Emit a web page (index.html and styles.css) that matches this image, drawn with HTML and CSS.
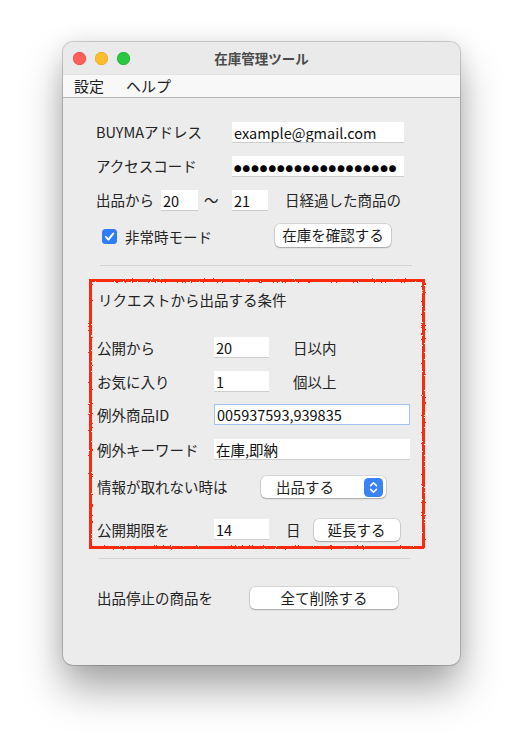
FILE: index.html
```html
<!DOCTYPE html>
<html lang="ja">
<head>
<meta charset="utf-8">
<title>在庫管理ツール</title>
<link rel="stylesheet" href="styles.css">
</head>
<body>
<svg class="defs" width="0" height="0" aria-hidden="true">
  <filter id="rough" x="-5%" y="-5%" width="110%" height="110%">
    <feTurbulence type="fractalNoise" baseFrequency="0.9" numOctaves="2" seed="3" result="noise"/>
    <feDisplacementMap in="SourceGraphic" in2="noise" scale="2.6" xChannelSelector="R" yChannelSelector="G"/>
  </filter>
</svg>
<div class="window">
  <div class="titlebar">
    <div class="lights">
      <span class="light red"></span>
      <span class="light yellow"></span>
      <span class="light green"></span>
    </div>
    <div class="title">在庫管理ツール</div>
    <div></div>
  </div>
  <div class="menubar">
    <span>設定</span>
    <span>ヘルプ</span>
  </div>
  <div class="content">
    <div class="top">
      <div class="row">
        <div class="lbl-top">BUYMAアドレス</div>
        <div class="field w172">example@gmail.com</div>
      </div>
      <div class="row">
        <div class="lbl-top">アクセスコード</div>
        <div class="field w172"><span class="dots">●●●●●●●●●●●●●●●●●●●</span></div>
      </div>
      <div class="row">
        <div class="lbl-from">出品から</div>
        <div class="field w37">20</div>
        <div class="tilde">〜</div>
        <div class="field w36">21</div>
        <div class="after">日経過した商品の</div>
      </div>
      <div class="row row-chk">
        <div class="chk">
          <svg width="15" height="15" viewBox="0 0 15 15"><rect width="15" height="15" rx="3.5" fill="#2f7cf6"/><path d="M3.9 7.9 L6.4 10.6 L11.2 4.6" stroke="#fff" stroke-width="2" fill="none" stroke-linecap="round" stroke-linejoin="round"/></svg>
          <span>非常時モード</span>
        </div>
        <div class="btn w116">在庫を確認する</div>
      </div>
    </div>
    <div class="sep sep1"></div>
    <div class="req">
      <div class="req-title">リクエストから出品する条件</div>
      <div class="row r1">
        <div class="lbl-req">公開から</div>
        <div class="field w55">20</div>
        <div class="unit">日以内</div>
      </div>
      <div class="row r2">
        <div class="lbl-req">お気に入り</div>
        <div class="field w55">1</div>
        <div class="unit">個以上</div>
      </div>
      <div class="row r3">
        <div class="lbl-req">例外商品ID</div>
        <div class="field w196 focus">005937593,939835</div>
      </div>
      <div class="row r4">
        <div class="lbl-req">例外キーワード</div>
        <div class="field w196">在庫,即納</div>
      </div>
      <div class="row r5">
        <div class="lbl-wide">情報が取れない時は</div>
        <div class="select">
          <span>出品する</span>
          <svg class="stepper" width="19" height="19" viewBox="0 0 19 19"><rect width="19" height="19" rx="4.5" fill="#3a83f7"/><path d="M6.6 7.6 L9.5 4.7 L12.4 7.6 M6.6 11.4 L9.5 14.3 L12.4 11.4" stroke="#fff" stroke-width="1.6" fill="none" stroke-linecap="round" stroke-linejoin="round"/></svg>
        </div>
      </div>
      <div class="row r6">
        <div class="lbl-req">公開期限を</div>
        <div class="field w55">14</div>
        <div class="day">日</div>
        <div class="btn w86">延長する</div>
      </div>
    </div>
    <div class="sep sep2"></div>
    <div class="row final">
      <div class="lbl-final">出品停止の商品を</div>
      <div class="btn w148">全て削除する</div>
    </div>
  </div>
</div>
</body>
</html>
```

FILE: styles.css
```css
* { box-sizing: border-box; }

html {
  height: 100%;
  background: #ffffff;
}

body {
  margin: 0;
  min-height: 750px;
  background: #ffffff;
  font-family: "Noto Sans CJK JP", "Noto Sans", sans-serif;
  color: #242424;
  padding-top: 42px;
}

.defs {
  position: absolute;
  width: 0;
  height: 0;
}

.window {
  margin: 0 0 0 63px;
  width: 397px;
  height: 623px;
  background: #ececec;
  border-radius: 10px;
  overflow: hidden;
  box-shadow:
    0 0 0 1px rgba(0, 0, 0, 0.17),
    0 24px 40px rgba(0, 0, 0, 0.34),
    0 0 22px rgba(0, 0, 0, 0.09);
}

/* title bar */
.titlebar {
  height: 33px;
  display: grid;
  grid-template-columns: 1fr auto 1fr;
  align-items: center;
  background: #eaeaea;
  border-bottom: 1px solid #e2e2e2;
}
.lights {
  display: flex;
  gap: 9px;
  padding-left: 10px;
}
.light {
  width: 13px;
  height: 13px;
  border-radius: 50%;
}
.light.red { background: #fe5f57; box-shadow: inset 0 0 0 0.5px #e2463f; }
.light.yellow { background: #febc2e; box-shadow: inset 0 0 0 0.5px #e1a116; }
.light.green { background: #2ac840; box-shadow: inset 0 0 0 0.5px #1aab29; }
.title {
  font-size: 13.5px;
  font-weight: 600;
  color: #4a4a4a;
  line-height: 20px;
}

/* menu */
.menubar {
  height: 23px;
  background: #f8f8f8;
  border-bottom: 1px solid #b5b5b5;
  display: flex;
  gap: 22px;
  padding-left: 11px;
  font-size: 15px;
  line-height: 22px;
  color: #1e1e1e;
}

/* content */
.content {
  padding-top: 23px;
}
.top {
  display: flex;
  flex-direction: column;
  gap: 12px;
  padding-left: 33px;
}
.row {
  display: flex;
  align-items: center;
  height: 22px;
  font-size: 14.5px;
  line-height: 20px;
  white-space: nowrap;
}
.lbl-top { width: 136px; }
.lbl-from { width: 65px; }
.tilde { width: 34px; padding-left: 6px; }
.after { margin-left: 17px; }

.field {
  height: 21px;
  background: #ffffff;
  border-bottom: 1px solid #cdcdcd;
  padding: 0 2px;
  line-height: 21px;
  overflow: hidden;
  white-space: nowrap;
  color: #111;
}
.field.focus {
  border: 1px solid #a3c4f0;
  line-height: 19px;
}
.w172 { width: 172px; }
.w37 { width: 37px; }
.w36 { width: 36px; }
.w55 { width: 55px; }
.w196 { width: 196px; }

.dots {
  font-family: "Noto Sans CJK JP", sans-serif;
  font-size: 7.5px;
  letter-spacing: 1.1px;
  color: #000;
  vertical-align: 1px;
}

.row-chk { height: 24px; }
.chk {
  width: 179px;
  display: flex;
  align-items: center;
  gap: 8px;
  padding-left: 6px;
  padding-top: 3px;
}
.chk svg { display: block; }

.btn {
  height: 22px;
  background: #ffffff;
  border-radius: 5px;
  box-shadow: 0 0 0 0.5px rgba(0, 0, 0, 0.2), 0 1px 1.5px rgba(0, 0, 0, 0.22);
  display: flex;
  align-items: center;
  justify-content: center;
  color: #1c1c1c;
}
.w116 { width: 116px; height: 23px; }
.w86 { width: 86px; }
.w148 { width: 148px; }

.sep {
  height: 1px;
  background: #d3d3d3;
  width: 312px;
}
.sep1 { margin: 18px 0 0 37px; }
.sep2 { margin: 9px 0 0 35px; }

/* request conditions (red annotated box) */
.req {
  position: relative;
  margin: 13px 0 0 26px;
  width: 336px;
  padding: 11px 0 8px 8px;
}
.req::before {
  content: "";
  position: absolute;
  inset: 0;
  border: 3px solid #fb2a0c;
  filter: url(#rough);
}
.req-title {
  font-size: 14.5px;
  line-height: 20px;
  padding-left: 1px;
}
.req .row { height: 21px; }
.r1 { margin-top: 27px; }
.r2 { margin-top: 13px; }
.r3 { margin-top: 12px; }
.r4 { margin-top: 14px; }
.req .r5 { margin-top: 16px; height: 22px; }
.req .r6 { margin-top: 20px; height: 23px; }

.lbl-req { width: 117px; }
.lbl-wide { width: 164px; }
.unit { margin-left: 24px; }
.day { margin-left: 17px; }
.r6 .btn { margin-left: 13px; }

.select {
  width: 125px;
  height: 22px;
  background: #ffffff;
  border-radius: 5px;
  box-shadow: 0 0 0 0.5px rgba(0, 0, 0, 0.2), 0 1px 1.5px rgba(0, 0, 0, 0.22);
  display: flex;
  align-items: center;
  padding-left: 15px;
  padding-right: 3px;
}
.stepper {
  display: block;
  margin-left: auto;
}

.final {
  margin-top: 28px;
  padding-left: 34px;
}
.lbl-final { width: 153px; }
```
